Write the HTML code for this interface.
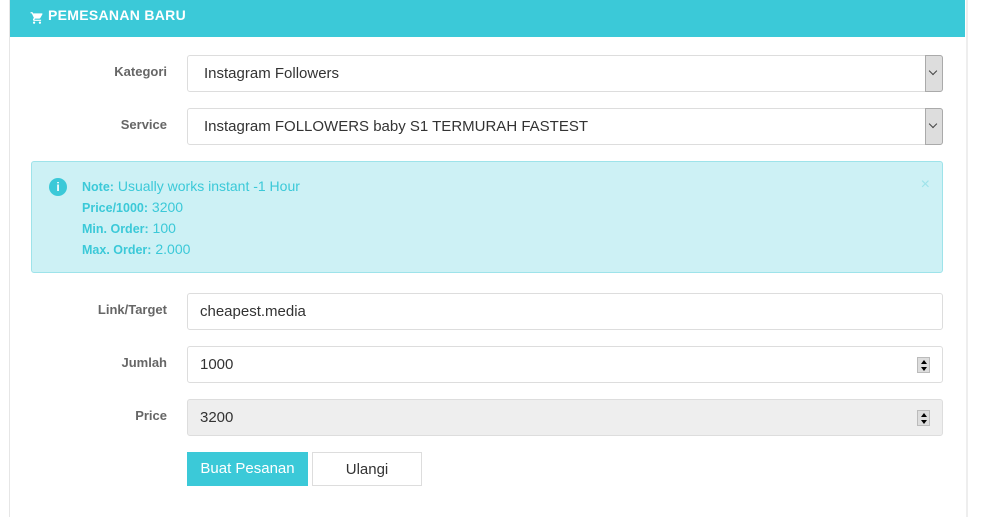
<!DOCTYPE html>
<html><head><style>
body{margin:0;width:983px;height:517px;background:#fff;font-family:"Liberation Sans",sans-serif;position:relative;overflow:hidden}
.card{position:absolute;left:9px;top:0;width:956px;height:517px;border-left:1px solid #e6e6e6;border-right:2px solid #eee;background:#fff}
.hdr{position:absolute;left:10px;top:0;width:955px;height:37px;background:#3bc9d8;color:#fff;font-weight:bold;font-size:14px}
.hdr .t{position:absolute;left:38px;top:7px;letter-spacing:.3px}
.lbl{position:absolute;right:816px;font-size:13px;font-weight:bold;color:#666;text-align:right}
.inp{position:absolute;left:187px;width:754px;height:35px;border:1px solid #ddd;border-radius:3px;background:#fff;font-size:15px;color:#333;box-sizing:content-box}
.inp span{position:absolute;left:15px;top:9px}
.sel span{left:16px}
.arr{position:absolute;right:-1px;top:-1px;width:16px;height:35px;background:#ddd;border:1px solid #aaa;border-radius:0 3px 3px 0}
.arr:after{content:"";position:absolute;left:4px;top:12px;width:5px;height:5px;border-right:1px solid #444;border-bottom:1px solid #444;transform:rotate(45deg)}
.spin{position:absolute;right:12px;top:10px;width:13px;height:16px;background:#ddd;border:1px solid #bbb;box-sizing:border-box}
.spin:before{content:"";position:absolute;left:3px;top:2px;border:3px solid transparent;border-bottom:4px solid #000;border-top:0}
.spin:after{content:"";position:absolute;left:3px;top:9px;border:3px solid transparent;border-top:4px solid #000;border-bottom:0}
.alert{position:absolute;left:31px;top:161px;width:910px;height:110px;background:#cdf1f5;border:1px solid #9ee3ea;border-radius:3px;color:#3bc9d8;font-size:14px}
.alert b{font-size:12.5px}
.btn{position:absolute;top:452px;height:34px;font-size:15px;text-align:center;line-height:33px;box-sizing:border-box}
</style></head><body>
<div class="card"></div>
<div class="hdr"><svg style="position:absolute;left:20px;top:11px" width="14" height="14" viewBox="0 0 24 24"><path fill="#fff" d="M7 18a2 2 0 100 4 2 2 0 000-4zM1 2v2h2l3.6 7.6-1.4 2.4c-.6 1.3.4 3 1.8 3h12v-2H7.4l1.1-2h7.5c.8 0 1.4-.4 1.7-1l3.6-6.5A1 1 0 0020.4 4H5.2l-.9-2zM17 18a2 2 0 100 4 2 2 0 000-4z"/></svg><div class="t">PEMESANAN BARU</div></div>

<div class="lbl" style="top:64px">Kategori</div>
<div class="inp sel" style="top:55px"><span>Instagram Followers</span><div class="arr"></div></div>
<div class="lbl" style="top:117px">Service</div>
<div class="inp sel" style="top:108px"><span>Instagram FOLLOWERS baby S1 TERMURAH FASTEST</span><div class="arr"></div></div>

<div class="alert">
<div style="position:absolute;left:17px;top:16px;width:18px;height:18px;border-radius:50%;background:#3bc9d8;color:#fff;font-size:12px;font-weight:bold;text-align:center;line-height:18px">i</div>
<div style="position:absolute;left:50px;top:14px;line-height:20px"><b>Note:</b> Usually works instant -1 Hour<br><b>Price/1000:</b> 3200<br><b>Min. Order:</b> 100<br><b>Max. Order:</b> 2.000</div>
<div style="position:absolute;right:12px;top:14px;color:#9ee3ea;font-size:16px">×</div>
</div>

<div class="lbl" style="top:302px">Link/Target</div>
<div class="inp" style="top:293px"><span style="left:12px">cheapest.media</span></div>
<div class="lbl" style="top:355px">Jumlah</div>
<div class="inp" style="top:346px"><span style="left:12px">1000</span><div class="spin"></div></div>
<div class="lbl" style="top:408px">Price</div>
<div class="inp" style="top:399px;background:#eee"><span style="left:12px">3200</span><div class="spin"></div></div>

<div class="btn" style="left:187px;width:121px;background:#3bc9d8;color:#fff">Buat Pesanan</div>
<div class="btn" style="left:312px;width:110px;border:1px solid #ddd;color:#333;background:#fff">Ulangi</div>
</body></html>
